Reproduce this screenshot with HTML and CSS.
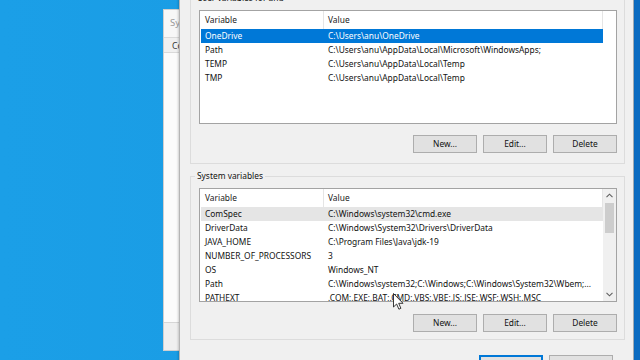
FILE: index.html
```html
<!DOCTYPE html>
<html lang="en">
<head>
<meta charset="utf-8">
<title>Environment Variables</title>
<link rel="stylesheet" href="styles.css">
</head>
<body>
<div class="desktop">
  <div class="win sysprops">
    <div class="sp-title">System Properties</div>
    <div class="sp-tabs"><span class="sp-tab">Computer Name</span></div>
    <div class="sp-panel"></div>
    <div class="sp-foot"></div>
  </div>

  <div class="win envdlg">
    <div class="group">
      <div class="group-label">User variables for anu</div>
      <div class="list">
        <div class="rows">
          <div class="row head"><span class="c1">Variable</span><span class="c2">Value</span></div>
          <div class="row sel"><span class="c1">OneDrive</span><span class="c2">C:\Users\anu\OneDrive</span></div>
          <div class="row"><span class="c1">Path</span><span class="c2">C:\Users\anu\AppData\Local\Microsoft\WindowsApps;</span></div>
          <div class="row"><span class="c1">TEMP</span><span class="c2">C:\Users\anu\AppData\Local\Temp</span></div>
          <div class="row"><span class="c1">TMP</span><span class="c2">C:\Users\anu\AppData\Local\Temp</span></div>
        </div>
      </div>
      <div class="btns">
        <button class="btn">New...</button>
        <button class="btn">Edit...</button>
        <button class="btn">Delete</button>
      </div>
    </div>

    <div class="group second">
      <div class="group-label">System variables</div>
      <div class="list">
        <div class="rows">
          <div class="row head"><span class="c1">Variable</span><span class="c2">Value</span></div>
          <div class="row hov"><span class="c1">ComSpec</span><span class="c2">C:\Windows\system32\cmd.exe</span></div>
          <div class="row"><span class="c1">DriverData</span><span class="c2">C:\Windows\System32\Drivers\DriverData</span></div>
          <div class="row"><span class="c1">JAVA_HOME</span><span class="c2">C:\Program Files\Java\jdk-19</span></div>
          <div class="row"><span class="c1">NUMBER_OF_PROCESSORS</span><span class="c2">3</span></div>
          <div class="row"><span class="c1">OS</span><span class="c2">Windows_NT</span></div>
          <div class="row"><span class="c1">Path</span><span class="c2">C:\Windows\system32;C:\Windows;C:\Windows\System32\Wbem;...</span></div>
          <div class="row"><span class="c1">PATHEXT</span><span class="c2">.COM;.EXE;.BAT;.CMD;.VBS;.VBE;.JS;.JSE;.WSF;.WSH;.MSC</span></div>
        </div>
        <div class="vscroll">
          <div class="sb-arrow">
            <svg width="7" height="5" viewBox="0 0 7 5"><path d="M0.5 4.2 L3.5 1.2 L6.5 4.2" fill="none" stroke="#606060" stroke-width="1.1"/></svg>
          </div>
          <div class="sb-track"><div class="sb-thumb"></div></div>
          <div class="sb-arrow">
            <svg width="7" height="5" viewBox="0 0 7 5"><path d="M0.5 0.8 L3.5 3.8 L6.5 0.8" fill="none" stroke="#606060" stroke-width="1.1"/></svg>
          </div>
        </div>
      </div>
      <div class="btns second-btns">
        <button class="btn">New...</button>
        <button class="btn">Edit...</button>
        <button class="btn">Delete</button>
      </div>
    </div>

    <div class="footer">
      <button class="btn default">OK</button>
      <button class="btn">Cancel</button>
    </div>
  </div>

  <svg class="cursor" width="12" height="18" viewBox="0 0 12 18">
    <path d="M0.5 0.5 L0.5 14 L3.6 11 L5.9 16.2 L7.9 15.3 L5.7 10.3 L10 10.3 Z" fill="#fff" stroke="#222" stroke-width="0.9" stroke-linejoin="round"/>
  </svg>
</div>
</body>
</html>
```

FILE: styles.css
```css
* { box-sizing: border-box; }

html, body {
  margin: 0;
  padding: 0;
  width: 640px;
  height: 360px;
  overflow: hidden;
}

body {
  font-family: "Segoe UI", "Noto Sans", "Open Sans", sans-serif;
  font-size: 8.4px;
  color: #111;
}

.desktop {
  position: relative;
  width: 640px;
  height: 360px;
  overflow: hidden;
  background: linear-gradient(90deg, #1b9fe7 0%, #1a9de5 30%, #1487d8 55%, #0b6ec4 85%, #0b6bc1 100%);
}

.win {
  position: absolute;
}

/* Background "System Properties" window */
.sysprops {
  left: 163px;
  top: 9px;
  width: 300px;
  height: 342px;
  background: #f0f0f0;
  border: 1px solid #cfcfcf;
  display: flex;
  flex-direction: column;
}

.sp-title {
  height: 27px;
  padding: 6px 0 0 6px;
  color: #9a9a9a;
  font-size: 9.5px;
  background: #f7f7f7;
}

.sp-tabs {
  height: 15px;
  border-top: 1px solid #dadada;
  padding-left: 8px;
}

.sp-tab {
  display: inline-block;
  padding-top: 2px;
  color: #333;
  font-size: 8.6px;
}

.sp-panel {
  flex: 1;
  background: #fbfbfb;
  border-top: 1px solid #d9d9d9;
  border-bottom: 1px solid #d6d6d6;
}

.sp-foot {
  height: 27px;
  background: #efefef;
}

/* Environment Variables dialog */
.envdlg {
  left: 179px;
  top: -14px;
  width: 455px;
  height: 390px;
  background: #f0f0f0;
  border-left: 1px solid #b5b5b5;
  border-right: 1px solid #9fa9b3;
  box-shadow: -1px 0 2px rgba(0, 0, 0, 0.18);
  padding: 12px 0 0 10px;
}

.group {
  position: relative;
  width: 435px;
  border: 1px solid #dcdcdc;
  padding: 11px 7px 10px 8px;
}

.group.second {
  margin-top: 12px;
  padding-bottom: 7px;
}

.group-label {
  position: absolute;
  left: 4px;
  top: -7px;
  line-height: 12px;
  padding: 0 2px;
  background: #f0f0f0;
  color: #111;
}

.list {
  height: 114px;
  background: #fff;
  border: 1px solid #a3a3a3;
  padding-left: 1px;
  display: flex;
  overflow: hidden;
}

.rows {
  width: 402px;
  flex: none;
}

.row {
  display: flex;
  height: 14px;
  line-height: 14px;
  white-space: nowrap;
  color: #111;
}

.row .c1 {
  width: 123px;
  padding-left: 4px;
  flex: none;
  overflow: hidden;
}

.row .c2 {
  flex: 1;
  padding-left: 4px;
  overflow: hidden;
}

.row.head {
  height: 18px;
  line-height: 17px;
  color: #222;
}

.row.head .c1 {
  border-right: 1px solid #e5e5e5;
}

.row.head .c2 {
  border-right: 1px solid #e5e5e5;
}

.row.sel {
  background: #0078d7;
  color: #fff;
}

.row.hov {
  background: #e5e5e5;
}

.vscroll {
  width: 13px;
  flex: none;
  background: #f0f0f0;
  display: flex;
  flex-direction: column;
}

.sb-arrow {
  height: 13px;
  display: flex;
  align-items: center;
  justify-content: center;
}

.sb-track {
  flex: 1;
  padding: 1px 2px 0 2px;
}

.sb-thumb {
  height: 30px;
  background: #cdcdcd;
}

.btns {
  display: flex;
  justify-content: flex-end;
  gap: 6px;
  margin-top: 11px;
}

.second-btns {
  margin-top: 12px;
}

.btn {
  width: 64px;
  height: 18px;
  padding: 0;
  margin: 0;
  font-family: inherit;
  font-size: 8.4px;
  line-height: 16px;
  color: #111;
  background: #e1e1e1;
  border: 1px solid #adadad;
  border-radius: 0;
}

.btn.default {
  border: 1px solid #0078d7;
  box-shadow: inset 0 0 0 1px #0078d7;
}

.footer {
  display: flex;
  justify-content: flex-end;
  gap: 6px;
  margin-top: 15px;
  width: 423px;
}

.cursor {
  position: absolute;
  left: 393px;
  top: 293px;
}
```
